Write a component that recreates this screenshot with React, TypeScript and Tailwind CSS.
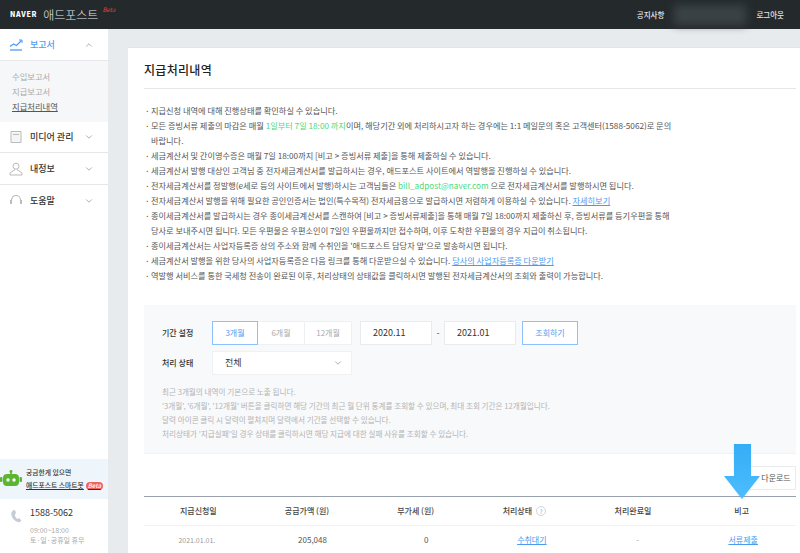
import React from "react";
import { ChevronDown, ChevronUp } from "lucide-react";

const G = ({ children }: { children: React.ReactNode }) => <span className="text-[#4cd97b]">{children}</span>;
const A = ({ children }: { children: React.ReactNode }) => <span className="text-[#4a9bef] underline">{children}</span>;

const notices: React.ReactNode[] = [
  <>지급신청 내역에 대해 진행상태를 확인하실 수 있습니다.</>,
  <>
    모든 증빙서류 제출의 마감은 매월 <G>1일부터 7일 18:00 까지</G>이며, 해당기간 외에 처리하시고자 하는 경우에는 1:1 메일문의 혹은 고객센터(1588-5062)로 문의
    <br />
    바랍니다.
  </>,
  <>세금계산서 및 간이영수증은 매월 7일 18:00까지 [비고 &gt; 증빙서류 제출]을 통해 제출하실 수 있습니다.</>,
  <>세금계산서 발행 대상인 고객님 중 전자세금계산서를 발급하시는 경우, 애드포스트 사이트에서 역발행을 진행하실 수 있습니다.</>,
  <>
    전자세금계산서를 정발행(e세로 등의 사이트에서 발행)하시는 고객님들은 <G>bill_adpost@naver.com</G> 으로 전자세금계산서를 발행하시면 됩니다.
  </>,
  <>
    전자세금계산서 발행을 위해 필요한 공인인증서는 법인(특수목적) 전자세금용으로 발급하시면 저렴하게 이용하실 수 있습니다. <A>자세히보기</A>
  </>,
  <>
    종이세금계산서를 발급하시는 경우 종이세금계산서를 스캔하여 [비고 &gt; 증빙서류제출]을 통해 매월 7일 18:00까지 제출하신 후, 증빙서류를 등기우편을 통해
    <br />
    당사로 보내주시면 됩니다. 모든 우편물은 우편소인이 7일인 우편물까지만 접수하며, 이후 도착한 우편물의 경우 지급이 취소됩니다.
  </>,
  <>종이세금계산서는 사업자등록증 상의 주소와 함께 수취인을 '애드포스트 담당자 앞'으로 발송하시면 됩니다.</>,
  <>
    세금계산서 발행을 위한 당사의 사업자등록증은 다음 링크를 통해 다운받으실 수 있습니다. <A>당사의 사업자등록증 다운받기</A>
  </>,
  <>역발행 서비스를 통한 국세청 전송이 완료된 이후, 처리상태의 상태값을 클릭하시면 발행된 전자세금계산서의 조회와 출력이 가능합니다.</>,
];

const helpLines = [
  "최근 3개월의 내역이 기본으로 노출 됩니다.",
  "'3개월', '6개월', '12개월' 버튼을 클릭하면 해당 기간의 최근 월 단위 통계를 조회할 수 있으며, 최대 조회 기간은 12개월입니다.",
  "달력 아이콘 클릭 시 달력이 펼쳐지며 달력에서 기간을 선택할 수 있습니다.",
  "처리상태가 '지급실패'일 경우 상태를 클릭하시면 해당 지급에 대한 실패 사유를 조회할 수 있습니다.",
];

function NavRow({ icon, label, open, className }: { icon: React.ReactNode; label: string; open?: boolean; className: string }) {
  const Chevron = open ? ChevronUp : ChevronDown;
  return (
    <div className={`flex items-center border-b border-gray-200 pl-1.5 pr-3.5 ${className}`}>
      <span className="flex w-5 justify-center">{icon}</span>
      <span className={`ml-1 flex-1 text-[9px] font-medium ${open ? "text-[#4f9bf5]" : "text-[#333]"}`}>{label}</span>
      <Chevron className="size-2.5 text-gray-400" strokeWidth={2} />
    </div>
  );
}

function Sidebar() {
  return (
    <aside className="flex w-27 shrink-0 flex-col bg-white">
      <NavRow
        open
        label="보고서"
        className="h-8"
        icon={
          <svg viewBox="0 0 14 12" className="h-3 w-3.5" fill="none" stroke="#4f9bf5">
            <path d="M1 7.5 4.500 5l3 1.500L12.500 1.500" strokeWidth="1.3" />
            <path d="M10 1h3v3" strokeWidth="1" />
            <path d="M1 11h12" strokeWidth="1.3" />
          </svg>
        }
      />
      <div className="bg-[#f6f7f9] pb-2 pl-3 pt-2 text-[8.3px] leading-[15px] text-[#aaa]">
        <div>수입보고서</div>
        <div>지급보고서</div>
        <div className="text-[#555] underline">지급처리내역</div>
      </div>
      <NavRow
        label="미디어 관리"
        className="h-[31px]"
        icon={
          <svg viewBox="0 0 12 13" className="h-3.5 w-3" fill="none" stroke="#bbb">
            <path d="M1 1h10v11H1z" fill="#f5f5f5" />
            <path d="M3 4h6" />
          </svg>
        }
      />
      <NavRow
        label="내정보"
        className="h-8"
        icon={
          <svg viewBox="0 0 14 14" className="size-3.5" fill="none" stroke="#bbb">
            <circle cx="7" cy="4.200" r="3" />
            <path d="M6 7.500 1 11v2h12v-2L8 7.500" />
          </svg>
        }
      />
      <div className="flex h-8 items-center pl-1.5 pr-3.5">
        <span className="flex w-5 justify-center">
          <svg viewBox="0 0 14 14" className="size-3.5" fill="none" stroke="#bbb">
            <path d="M2.500 9V6a4.500 4.500 0 0 1 9 0v3" strokeWidth="1.1" />
            <rect x="1" y="6" width="1.8" height="4" fill="#bbb" stroke="none" />
            <rect x="11.2" y="6" width="1.8" height="4" fill="#bbb" stroke="none" />
          </svg>
        </span>
        <span className="ml-1 flex-1 text-[9px] font-medium text-[#333]">도움말</span>
        <ChevronDown className="size-2.5 text-gray-400" strokeWidth={2} />
      </div>

      <div className="mt-auto flex h-10 items-center bg-[#eef5fb]">
        <svg viewBox="0 0 22 18" className="h-4.5 w-5.5 shrink-0">
          <rect x="0" y="7" width="2.5" height="5" rx="1" fill="#5cb531" />
          <rect x="19.5" y="7" width="2.5" height="5" rx="1" fill="#5cb531" />
          <rect x="10.2" y="1" width="1.6" height="4" fill="#5cb531" />
          <circle cx="11" cy="1.5" r="1.4" fill="#5cb531" />
          <rect x="3" y="4" width="16" height="12" rx="4" fill="#5cb531" />
          <circle cx="8" cy="10" r="1.7" fill="#fff" />
          <circle cx="14" cy="10" r="1.7" fill="#fff" />
        </svg>
        <div className="ml-1 text-[6.8px] font-medium leading-[13px] text-[#333]">
          <div>궁금한게 있으면</div>
          <div className="flex items-center whitespace-nowrap underline">
            애드포스트 스마트봇
            <span className="ml-0.5 rounded-full bg-[#f0625a] px-0.5 text-[6px] italic leading-2 text-white">Beta</span>
          </div>
        </div>
      </div>
      <div className="flex pb-2 pl-2.5 pt-1.5">
        <svg viewBox="0 0 12 14" className="mt-1 h-3.5 w-3">
          <path d="M4 1C1.500 2 1 4 1.500 6.500 2.500 10 5.500 13 9.500 13.200L11.500 11.500 9 9 7.500 10C6 9 5 7.500 4.800 5.500L6 4.500 5 1Z" fill="#c5ccd3" />
        </svg>
        <div className="ml-2">
          <div className="text-[9px] leading-4 text-[#333]">1588-5062</div>
          <div className="mt-1 text-[7px] leading-2.5 text-[#aaa]">
            <div>09:00~18:00</div>
            <div>토·일·공휴일 휴무</div>
          </div>
        </div>
      </div>
    </aside>
  );
}

function Header() {
  return (
    <header className="flex h-[29px] shrink-0 items-center bg-[#24292c] pl-2.5 pr-4 text-white">
      <span className="text-[7px] font-black tracking-widest">NAVER</span>
      <span className="ml-1.5 text-xs font-light text-gray-200">애드포스트</span>
      <span className="mb-2.5 ml-1 text-[6px] italic text-[#e0463c]">Beta</span>
      <span className="ml-auto text-[7.5px] font-medium text-gray-200">공지사항</span>
      <div className="ml-2.5 h-5 w-18 bg-[#3a4245] blur-xs" />
      <span className="ml-2.5 text-[7.5px] font-medium text-gray-200">로그아웃</span>
    </header>
  );
}

function Filter() {
  return (
    <section className="mt-5.5 border-b border-[#f1f3f6] bg-[#f8f9fb] pb-3 pl-4.5 pt-4">
      <div className="flex h-6 items-center">
        <span className="w-12.5 text-[8px] font-medium text-[#333]">기간 설정</span>
        <div className="flex h-6 w-35 text-[8px] text-[#aaa]">
          <button className="w-11.5 border border-[#8cc0ff] bg-white text-[#4f9bf5]">3개월</button>
          <button className="flex-1 border-y border-[#eef0f3] bg-white">6개월</button>
          <button className="flex-1 border border-[#eef0f3] bg-white">12개월</button>
        </div>
        <div className="ml-2 flex h-6 w-18 items-center border border-[#e9ebee] bg-white pl-3 text-[9px] text-[#333]">2020.11</div>
        <span className="w-3 text-center text-[9px] text-[#555]">-</span>
        <div className="flex h-6 w-18 items-center border border-[#e9ebee] bg-white pl-3 text-[9px] text-[#333]">2021.01</div>
        <button className="ml-1.5 h-6 w-14 border border-[#8cc0ff] bg-white text-[8px] text-[#4f9bf5]">조회하기</button>
      </div>
      <div className="mt-1.5 flex h-6 items-center">
        <span className="w-12.5 text-[8px] font-medium text-[#333]">처리 상태</span>
        <div className="flex h-6 w-35 items-center justify-between border border-[#f0f1f4] bg-white pl-3 pr-2 text-[9px] text-[#333]">
          전체
          <ChevronDown className="size-2.5 text-gray-400" />
        </div>
      </div>
      <div className="mt-2.5 text-[7.6px] leading-3.5 text-[#b4b4b4]">
        {helpLines.map((l) => (
          <div key={l}>{l}</div>
        ))}
      </div>
    </section>
  );
}

function Table() {
  const cell = "flex-1 text-center";
  return (
    <>
      <div className="relative mt-3 flex justify-end">
        <button className="h-6 w-12 border border-[#e9ebee] bg-white pl-2 text-[8px] text-[#555]">다운로드</button>
        <svg viewBox="0 0 38 56" preserveAspectRatio="none" className="absolute -top-5.5 right-9 h-14 w-9 drop-shadow-xs">
          <defs>
            <linearGradient id="arrow" x1="0" y1="0" x2="0" y2="1">
              <stop offset="0" stopColor="#35adf5" />
              <stop offset="1" stopColor="#4dbdff" />
            </linearGradient>
          </defs>
          <path d="M10.500 0H28.500V32H38L19 55 0 32H10.500Z" fill="url(#arrow)" />
        </svg>
      </div>
      <div className="mt-1.5 flex h-7.5 items-center border-y border-b-[#f1f2f4] border-t-gray-400 text-[8px] font-medium text-[#444]">
        <div className={cell}>지급신청일</div>
        <div className={cell}>공급가액 (원)</div>
        <div className={cell}>부가세 (원)</div>
        <div className={`${cell} flex items-center justify-center`}>
          처리상태
          <span className="ml-1 flex size-2.5 items-center justify-center rounded-full border border-gray-300 text-[6px] font-normal text-gray-400">?</span>
        </div>
        <div className={cell}>처리완료일</div>
        <div className={cell}>비고</div>
      </div>
      <div className="flex h-7 items-center text-[#555]">
        <div className={`${cell} text-[7px] text-[#999]`}>2021.01.01.</div>
        <div className={`${cell} pl-2.5 text-[8px]`}>205,048</div>
        <div className={`${cell} pl-2 text-[8px]`}>0</div>
        <div className={`${cell} text-[8px] text-[#4a9bef] underline`}>수취대기</div>
        <div className={`${cell} text-[8px] text-[#999]`}>-</div>
        <div className={`${cell} text-[8px] text-[#4a9bef] underline`}>서류제출</div>
      </div>
    </>
  );
}

export default function App() {
  return (
    <div className="flex h-screen flex-col overflow-hidden bg-[#e8ebee] font-['Noto_Sans_CJK_KR',sans-serif]">
      <Header />
      <div className="flex min-h-0 flex-1">
        <Sidebar />
        <main className="min-w-0 flex-1 overflow-hidden pl-5 pt-4.5">
          <div className="border-t border-[#e1e4e8] bg-white pl-4 pr-1">
            <h1 className="border-b border-gray-200 pb-2 pt-3 text-xs font-medium leading-5 tracking-wide text-[#222]">지급처리내역</h1>
            <ul className="mt-3.5 text-[8.2px] leading-[15px] text-[#555]">
              {notices.map((n, i) => (
                <li key={i} className="flex whitespace-nowrap pl-px">
                  <span className="w-1.5 shrink-0">·</span>
                  <span>{n}</span>
                </li>
              ))}
            </ul>
            <Filter />
            <Table />
          </div>
        </main>
      </div>
    </div>
  );
}
